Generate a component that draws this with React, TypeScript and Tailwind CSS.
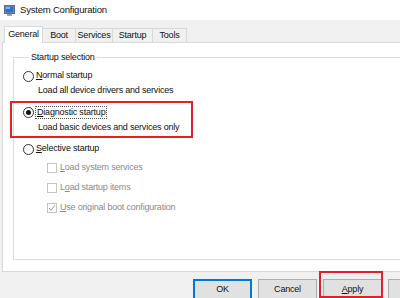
const tabs = [
  { label: "General", w: "w-[39px]", active: true },
  { label: "Boot", w: "w-[33px]" },
  { label: "Services", w: "w-[37px]" },
  { label: "Startup", w: "w-[40px]" },
  { label: "Tools", w: "w-[34px]" },
];

const Radio = ({ checked }: { checked?: boolean }) => (
  <span className="w-[11px] h-[11px] rounded-full border border-[#333] bg-white flex items-center justify-center shrink-0">
    {checked && <span className="w-[5px] h-[5px] rounded-full bg-[#111]" />}
  </span>
);

const Check = ({ checked }: { checked?: boolean }) => (
  <span className="w-[10px] h-[10px] border border-[#c4c4c4] bg-white flex items-center justify-center shrink-0">
    {checked && (
      <svg width="8" height="8" viewBox="0 0 8 8">
        <polyline points="1,4 3,6.3 7,1.2" fill="none" stroke="#9a9a9a" strokeWidth="1" />
      </svg>
    )}
  </span>
);

const SysIcon = () => (
  <svg width="11" height="11" viewBox="0 0 11 11">
    <rect x="0.5" y="0.5" width="10" height="8" fill="#8a9bb0" stroke="#5e6d80" />
    <rect x="1.5" y="1.5" width="8" height="6" fill="#2f6fd0" />
    <rect x="2" y="2" width="4" height="2" fill="#7fb2f0" />
    <rect x="3" y="9" width="5" height="2" fill="#9aa4b0" />
  </svg>
);

export default function App() {
  return (
    <div className="relative w-[400px] h-[298px] overflow-hidden bg-[#f0f0f0] text-[9px] tracking-[-0.2px] text-[#111] font-['Liberation_Sans',Arial,sans-serif]">
      <div className="h-[20px] bg-white flex items-center pl-[4px]">
        <SysIcon />
        <span className="ml-[5px] text-[9.5px]">System Configuration</span>
      </div>

      <div className="h-[22px] flex items-end pl-[4px]">
        {tabs.map((t, i) =>
          t.active ? (
            <div
              key={t.label}
              className={`${t.w} h-[17px] -mb-px relative z-10 bg-white border border-b-0 border-[#d9d9d9] flex items-center justify-center`}
            >
              {t.label}
            </div>
          ) : (
            <div
              key={t.label}
              className={`${t.w} h-[14px] border-t border-r border-[#d9d9d9] bg-[#f0f0f0] flex items-center justify-center ${i === 0 ? "border-l" : ""}`}
            >
              {t.label}
            </div>
          ),
        )}
      </div>

      <div className="ml-[2px] w-[420px] h-[230px] border border-[#d9d9d9] bg-white pt-[8px]">
        <fieldset className="ml-[10px] w-[420px] h-[209px] border border-[#dcdcdc] pl-[9px]">
          <legend className="ml-[6px] px-[2px] leading-[13px]">Startup selection</legend>

          <div className="mt-[5px] h-[14px] flex items-center gap-[2px]">
            <Radio />
            <span>
              <span className="underline">N</span>ormal startup
            </span>
          </div>
          <div className="mt-[1px] h-[14px] flex items-center pl-[15px]">
            Load all device drivers and services
          </div>

          <div className="mt-[7px] h-[14px] flex items-center gap-[1px]">
            <Radio checked />
            <span className="border border-dotted border-[#555] px-[1px] leading-[11px]">
              <span className="underline">D</span>iagnostic startup
            </span>
          </div>
          <div className="mt-[2px] h-[14px] flex items-center pl-[15px]">
            Load basic devices and services only
          </div>

          <div className="mt-[7px] h-[14px] flex items-center gap-[2px]">
            <Radio />
            <span>
              <span className="underline">S</span>elective startup
            </span>
          </div>

          <div className="pl-[24px] text-[#8a8a8a]">
            <div className="mt-[5px] h-[14px] flex items-center gap-[3px]">
              <Check />
              <span>
                <span className="underline">L</span>oad system services
              </span>
            </div>
            <div className="mt-[6px] h-[14px] flex items-center gap-[3px]">
              <Check />
              <span>
                L<span className="underline">o</span>ad startup items
              </span>
            </div>
            <div className="mt-[6px] h-[14px] flex items-center gap-[3px]">
              <Check checked />
              <span>
                <span className="underline">U</span>se original boot configuration
              </span>
            </div>
          </div>
        </fieldset>
      </div>

      <div className="flex gap-[6px] pl-[193px] mt-[7px] w-[500px]">
        <button className="shrink-0 w-[59px] h-[21px] bg-[#e1e1e1] border border-[#0078d7] shadow-[inset_0_0_0_1px_#0078d7]">
          OK
        </button>
        <button className="shrink-0 w-[59px] h-[21px] bg-[#e1e1e1] border border-[#adadad]">Cancel</button>
        <button className="shrink-0 w-[59px] h-[21px] bg-[#e1e1e1] border border-[#adadad]">
          <span className="underline">A</span>pply
        </button>
        <button aria-label="Help" className="shrink-0 w-[59px] h-[21px] bg-[#e1e1e1] border border-[#adadad]" />
      </div>

      <div className="absolute left-[10px] top-[101px] w-[183px] h-[37px] border-2 border-[#e3202a]" />
      <div className="absolute left-[319px] top-[271px] w-[64px] h-[27px] border-2 border-[#e3202a]" />
    </div>
  );
}
